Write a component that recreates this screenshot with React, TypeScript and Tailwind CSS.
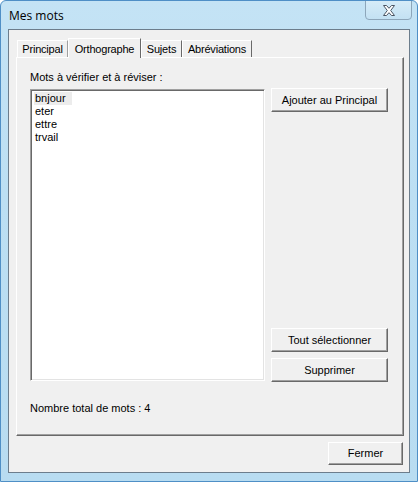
import React from "react";

const font = { fontFamily: '"Liberation Sans", Arial, sans-serif' };

function Btn({ children, className = "" }: { children: React.ReactNode; className?: string }) {
  return (
    <div
      className={
        "flex items-center justify-center bg-[#f0f0f0] border border-t-white border-l-white border-r-[#696969] border-b-[#696969] shadow-[inset_-1px_-1px_0_#a0a0a0] text-[11px] text-black " +
        className
      }
    >
      {children}
    </div>
  );
}

export default function App() {
  const words = ["bnjour", "eter", "ettre", "trvail"];
  return (
    <div
      className="w-[418px] h-[482px] bg-[linear-gradient(180deg,#c4e3f5_0%,#bcdff3_40%,#b8dcf1_100%)] border border-[#4f8fc6] rounded-t-[6px] flex flex-col overflow-hidden"
      style={font}
    >
      {/* Title bar */}
      <div className="h-[28px] flex items-start justify-between shrink-0">
        <div className="pl-[8px] pt-[6px] text-[12px] text-black" style={{ fontFamily: '"Open Sans", "Liberation Sans", sans-serif' }}>
          Mes mots
        </div>
        <div className="mr-[5px] mt-[-1px] w-[47px] h-[20px] rounded-b-[4px] border border-[#8da6ba] bg-[linear-gradient(180deg,#d6ecf8,#c3e1f3)] flex items-center justify-center">
          <svg width="14" height="11" viewBox="0 0 14 11">
            <path
              d="M1.5 0.5 H4.5 L7 3.3 L9.5 0.5 H12.5 L8.7 5.5 L12.5 10.5 H9.5 L7 7.7 L4.5 10.5 H1.5 L5.3 5.5 Z"
              fill="#ffffff"
              stroke="#4a5563"
              strokeWidth="1"
              strokeLinejoin="round"
            />
          </svg>
        </div>
      </div>
      {/* Client */}
      <div className="flex-1 mx-[7px] mb-[8px] border border-[#6c7d8c] bg-[#f0f0f0] flex flex-col">
        <div className="mt-[7px] ml-[7px] mr-[5px] flex flex-col">
          {/* Tabs */}
          <div className="flex items-end h-[20px] pl-[1px] tracking-[-0.2px]">
            <div className="w-[51px] h-[17px] flex items-center justify-center border-l border-t border-white border-r border-r-[#a0a0a0] text-[11px]">
              Principal
            </div>
            <div className="w-[73px] h-[20px] flex items-start justify-center pt-[2px] border-l border-t border-white border-r border-r-[#696969] bg-[#f0f0f0] relative z-10 mb-[-1px] text-[11px]">
              Orthographe
            </div>
            <div className="w-[41px] h-[17px] flex items-center justify-center border-l border-t border-white border-r border-r-[#696969] text-[11px]">
              Sujets
            </div>
            <div className="w-[70px] h-[17px] flex items-center justify-center border-l border-t border-white border-r border-r-[#696969] text-[11px]">
              Abréviations
            </div>
          </div>
          {/* Panel */}
          <div className="h-[379px] border border-t-white border-l-white border-r-[#696969] border-b-[#696969] shadow-[inset_-1px_-1px_0_#a0a0a0] flex flex-col pl-[13px] pt-[13px]">
            <div className="text-[11px] leading-[13px] mb-[5px]">Mots à vérifier et à réviser :</div>
            <div className="flex gap-[6px]">
              <div className="w-[235px] h-[292px] bg-white border border-t-[#a0a0a0] border-l-[#a0a0a0] border-r-white border-b-white shadow-[inset_1px_1px_0_#696969,inset_-1px_-1px_0_#e3e3e3] p-[2px] pl-[3px]">
                {words.map((w, i) => (
                  <div key={w} className="h-[13px] flex items-center text-[11px]">
                    <span className={i === 0 ? "bg-[#ececec] pl-[1px] pr-[6px] h-[13px] w-[38px] flex items-center" : "pl-[1px]"}>{w}</span>
                  </div>
                ))}
              </div>
              <div className="flex flex-col w-[117px] mt-[-1px]">
                <Btn className="h-[24px]">Ajouter au Principal</Btn>
                <div className="flex-1" />
                <Btn className="h-[24px] mb-[6px]">Tout sélectionner</Btn>
                <Btn className="h-[24px] mb-[-1px]">Supprimer</Btn>
              </div>
            </div>
            <div className="text-[11px] mt-[21px] leading-[13px]">Nombre total de mots : 4</div>
          </div>
        </div>
        <div className="flex justify-end mt-[6px] mr-[6px]">
          <Btn className="w-[75px] h-[23px]">Fermer</Btn>
        </div>
      </div>
    </div>
  );
}
